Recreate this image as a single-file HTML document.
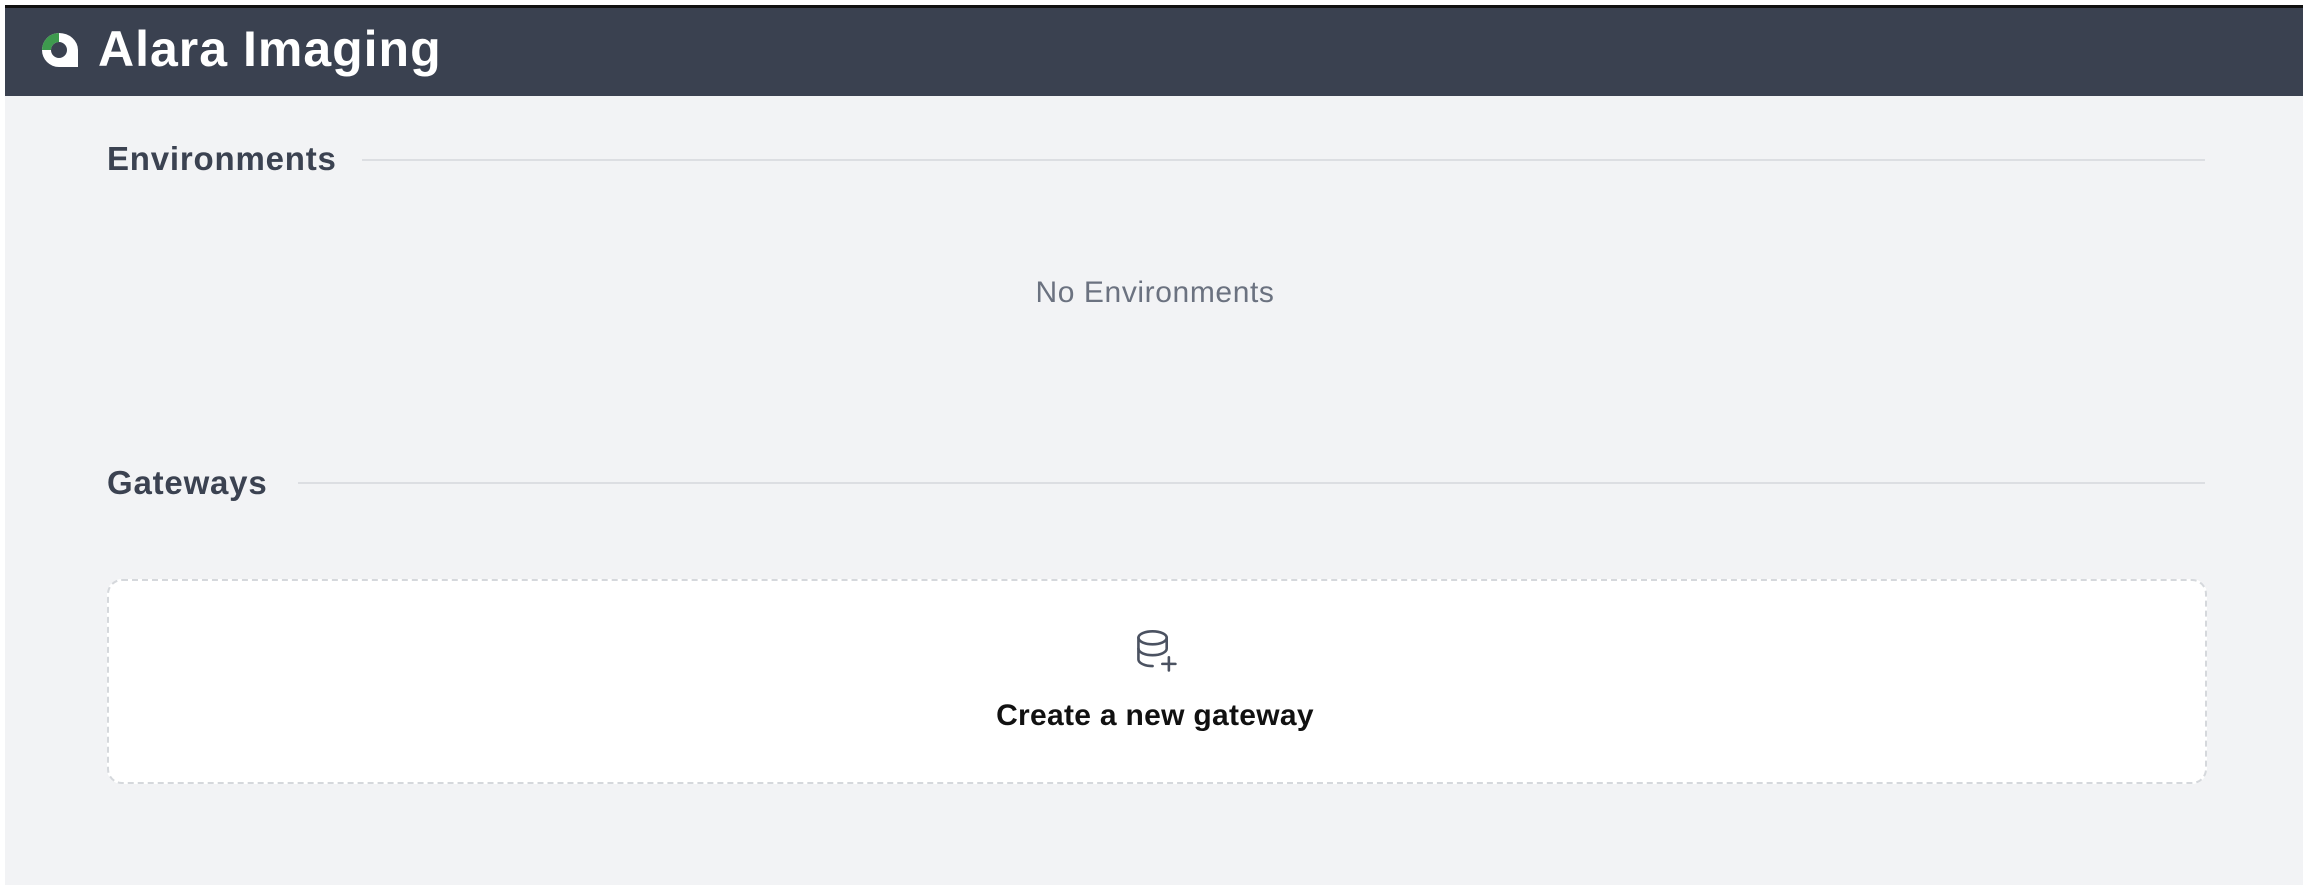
<!DOCTYPE html>
<html><head><meta charset="utf-8"><style>
body{margin:0;width:2310px;height:892px;background:#fff;position:relative;overflow:hidden;font-family:"Liberation Sans",sans-serif}
.top{position:absolute;left:5px;top:5px;width:2298px;height:3px;background:#111}
.hdr{position:absolute;left:5px;top:8px;width:2298px;height:88px;background:#3a4150}
.title{position:absolute;left:98px;top:20px;color:#fff;font-size:50px;font-weight:bold;letter-spacing:1px}
.main{position:absolute;left:5px;top:96px;width:2298px;height:789px;background:#f2f3f5}
.h{position:absolute;color:#3b4251;font-size:33px;font-weight:bold;letter-spacing:0.8px}
.line{position:absolute;height:2px;background:#dcdee2}
.empty{position:absolute;left:0;width:2310px;text-align:center;top:276px;color:#6b7280;font-size:30px;letter-spacing:0.6px}
.card{position:absolute;left:107px;top:579px;width:2096px;height:201px;background:#fff;border:2px dashed #d5d8dc;border-radius:15px}
.ct{position:absolute;left:0;width:2310px;text-align:center;top:699px;color:#111;font-size:30px;font-weight:bold;letter-spacing:0.3px}
</style></head><body>
<div class="top"></div>
<div class="hdr"></div>
<svg style="position:absolute;left:38px;top:31px" width="42" height="37" viewBox="0 0 42 37">
<path d="M21 2 A17 17 0 1 0 21 36 L40 36 L40 19 A19 17 0 0 0 21 2 Z M21 11 A8 8 0 1 1 21 27 A8 8 0 1 1 21 11Z" fill="#fff" fill-rule="evenodd"/>
<path d="M21 2 A17 17 0 0 0 4 19 L13 19 A8 8 0 0 1 21 11 Z" fill="#3e9a4e"/>
</svg>
<div class="title">Alara Imaging</div>
<div class="main"></div>
<div class="h" style="left:107px;top:140px">Environments</div>
<div class="line" style="left:362px;width:1843px;top:159px"></div>
<div class="empty">No Environments</div>
<div class="h" style="left:107px;top:464px">Gateways</div>
<div class="line" style="left:298px;width:1907px;top:482px"></div>
<div class="card"></div>
<svg style="position:absolute;left:1133px;top:628px" width="50" height="50" viewBox="0 0 46 46" fill="none" stroke="#4b5261" stroke-width="2.4" stroke-linecap="round">
<ellipse cx="18" cy="9" rx="13" ry="6"/>
<path d="M5 9v20c0 3.3 5.8 6 13 6"/>
<path d="M31 9v9"/>
<path d="M5 19c0 3.3 5.8 6 13 6s13-2.7 13-6"/>
<path d="M33 27v12M27 33h12"/>
</svg>
<div class="ct">Create a new gateway</div>
</body></html>
